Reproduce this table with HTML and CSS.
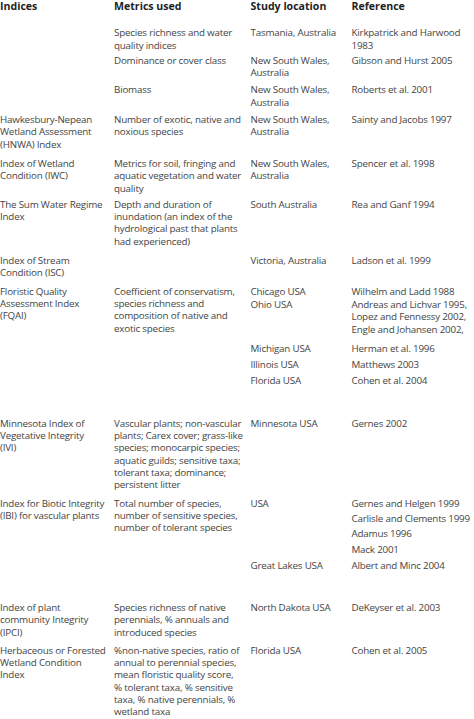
FILE: index.html
```html
<!DOCTYPE html>
<html lang="en">
<head>
<meta charset="utf-8">
<title>Wetland vegetation indices</title>
<link rel="stylesheet" href="styles.css">
</head>
<body>
<div class="table">
  <div class="row head">
    <div class="c idx">Indices</div>
    <div class="c met">Metrics used</div>
    <div class="c loc">Study location</div>
    <div class="c ref">Reference</div>
  </div>

  <div class="row g15">
    <div class="c idx"></div>
    <div class="c met">Species richness and water<br>quality indices</div>
    <div class="c loc">Tasmania, Australia</div>
    <div class="c ref">Kirkpatrick and Harwood<br>1983</div>
  </div>

  <div class="row g3">
    <div class="c idx"></div>
    <div class="c met">Dominance or cover class</div>
    <div class="c loc">New South Wales,<br>Australia</div>
    <div class="c ref">Gibson and Hurst 2005</div>
  </div>

  <div class="row g5">
    <div class="c idx"></div>
    <div class="c met">Biomass</div>
    <div class="c loc">New South Wales,<br>Australia</div>
    <div class="c ref">Roberts et al. 2001</div>
  </div>

  <div class="row g5">
    <div class="c idx">Hawkesbury-Nepean<br>Wetland Assessment<br>(HNWA) Index</div>
    <div class="c met">Number of exotic, native and<br>noxious species</div>
    <div class="c loc">New South Wales,<br>Australia</div>
    <div class="c ref">Sainty and Jacobs 1997</div>
  </div>

  <div class="row g7">
    <div class="c idx">Index of Wetland<br>Condition (IWC)</div>
    <div class="c met">Metrics for soil, fringing and<br>aquatic vegetation and water<br>quality</div>
    <div class="c loc">New South Wales,<br>Australia</div>
    <div class="c ref">Spencer et al. 1998</div>
  </div>

  <div class="row g4">
    <div class="c idx">The Sum Water Regime<br>Index</div>
    <div class="c met">Depth and duration of<br>inundation (an index of the<br>hydrological past that plants<br>had experienced)</div>
    <div class="c loc">South Australia</div>
    <div class="c ref">Rea and Ganf 1994</div>
  </div>

  <div class="row g7">
    <div class="c idx">Index of Stream<br>Condition (ISC)</div>
    <div class="c met"></div>
    <div class="c loc">Victoria, Australia</div>
    <div class="c ref">Ladson et al. 1999</div>
  </div>

  <div class="row g6">
    <div class="c idx">Floristic Quality<br>Assessment Index<br>(FQAI)</div>
    <div class="c met">Coefficient of conservatism,<br>species richness and<br>composition of native and<br>exotic species</div>
    <div class="subs">
      <div class="sub">
        <div class="c loc">Chicago USA</div>
        <div class="c ref">Wilhelm and Ladd 1988</div>
      </div>
      <div class="sub g1">
        <div class="c loc">Ohio USA</div>
        <div class="c ref">Andreas and Lichvar 1995,<br>Lopez and Fennessy 2002,<br>Engle and Johansen 2002,</div>
      </div>
      <div class="sub g7">
        <div class="c loc">Michigan USA</div>
        <div class="c ref">Herman et al. 1996</div>
      </div>
      <div class="sub g4">
        <div class="c loc">Illinois USA</div>
        <div class="c ref">Matthews 2003</div>
      </div>
      <div class="sub g4">
        <div class="c loc">Florida USA</div>
        <div class="c ref">Cohen et al. 2004</div>
      </div>
    </div>
  </div>

  <div class="row g30">
    <div class="c idx">Minnesota Index of<br>Vegetative Integrity<br>(IVI)</div>
    <div class="c met">Vascular plants; non-vascular<br>plants; Carex cover; grass-like<br>species; monocarpic species;<br>aquatic guilds; sensitive taxa;<br>tolerant taxa; dominance;<br>persistent litter</div>
    <div class="c loc">Minnesota USA</div>
    <div class="c ref">Gernes 2002</div>
  </div>

  <div class="row g6">
    <div class="c idx">Index for Biotic Integrity<br>(IBI) for vascular plants</div>
    <div class="c met">Total number of species,<br>number of sensitive species,<br>number of tolerant species</div>
    <div class="subs">
      <div class="sub">
        <div class="c loc">USA</div>
        <div class="c ref">Gernes and Helgen 1999</div>
      </div>
      <div class="sub g3">
        <div class="c loc"></div>
        <div class="c ref">Carlisle and Clements 1999</div>
      </div>
      <div class="sub g3">
        <div class="c loc"></div>
        <div class="c ref">Adamus 1996</div>
      </div>
      <div class="sub g4">
        <div class="c loc"></div>
        <div class="c ref">Mack 2001</div>
      </div>
      <div class="sub g3">
        <div class="c loc">Great Lakes USA</div>
        <div class="c ref">Albert and Minc 2004</div>
      </div>
    </div>
  </div>

  <div class="row g30">
    <div class="c idx">Index of plant<br>community Integrity<br>(IPCI)</div>
    <div class="c met">Species richness of native<br>perennials, % annuals and<br>introduced species</div>
    <div class="c loc">North Dakota USA</div>
    <div class="c ref">DeKeyser et al. 2003</div>
  </div>

  <div class="row g6">
    <div class="c idx">Herbaceous or Forested<br>Wetland Condition<br>Index</div>
    <div class="c met">%non-native species, ratio of<br>annual to perennial species,<br>mean floristic quality score,<br>% tolerant taxa, % sensitive<br>taxa, % native perennials, %<br>wetland taxa</div>
    <div class="c loc">Florida USA</div>
    <div class="c ref">Cohen et al. 2005</div>
  </div>
</div>
</body>
</html>
```

FILE: styles.css
```css
html, body {
  margin: 0;
  padding: 0;
  background: #ffffff;
}

body {
  font-family: "Open Sans", "Noto Sans", "Liberation Sans", sans-serif;
  font-size: 9.8px;
  letter-spacing: -0.2px;
  line-height: 12.3px;
  color: #444444;
}

.table {
  width: 474px;
  overflow: hidden;
}

.row {
  display: grid;
  grid-template-columns: 114px 136.5px 101px 1fr;
  align-items: start;
}

.head {
  font-size: 10.6px;
  letter-spacing: 0;
  font-weight: 700;
  color: #1f1f1f;
}

.c {
  white-space: nowrap;
}

.subs {
  grid-column: 3 / 5;
  display: flex;
  flex-direction: column;
}

.sub {
  display: grid;
  grid-template-columns: 101px 1fr;
  align-items: start;
}

.g1 { padding-top: 1px; }
.g3 { padding-top: 3px; }
.g4 { padding-top: 4px; }
.g5 { padding-top: 5px; }
.g6 { padding-top: 6px; }
.g7 { padding-top: 7px; }
.g15 { padding-top: 15px; }
.g30 { padding-top: 30px; }
```
